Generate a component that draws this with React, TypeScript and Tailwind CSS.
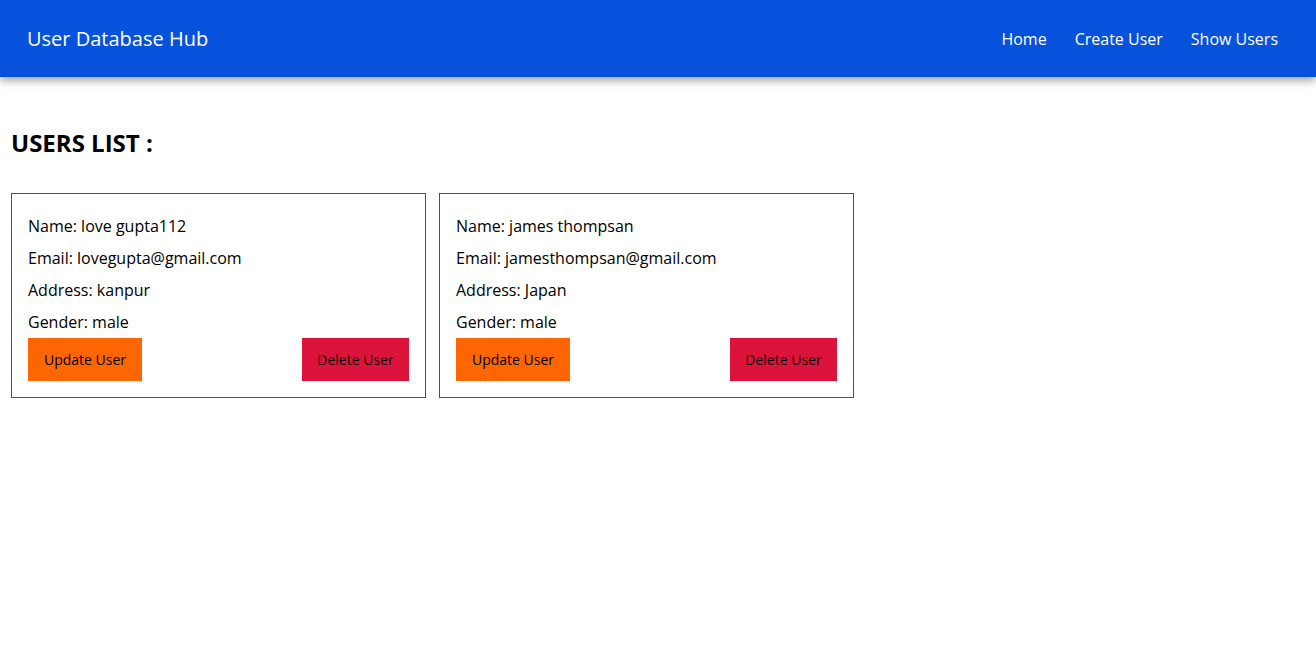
const users = [
  { name: 'love gupta112', email: 'lovegupta@gmail.com', address: 'kanpur', gender: 'male' },
  { name: 'james thompsan', email: 'jamesthompsan@gmail.com', address: 'Japan', gender: 'male' },
];

function UserCard({ user }: { user: (typeof users)[number] }) {
  return (
    <div className="w-[415px] border border-[#2552c4] px-4 pt-4 pb-4">
      <p className="leading-8">Name: {user.name}</p>
      <p className="leading-8">Email: {user.email}</p>
      <p className="leading-8">Address: {user.address}</p>
      <p className="leading-8">Gender: {user.gender}</p>
      <div className="flex justify-between">
        <button className="h-[43px] w-[114px] bg-[#ff6600] text-sm text-black">Update User</button>
        <button className="h-[43px] w-[107px] bg-[#dc143c] text-sm text-black">Delete User</button>
      </div>
    </div>
  );
}

export default function App() {
  return (
    <div className="min-h-screen bg-white text-black font-['Open_Sans',sans-serif]">
      {/* Navbar */}
      <nav className="flex h-[77px] items-center justify-between bg-[#0652dd] pl-[27px] pr-[38px] shadow-[0_4px_8px_rgba(0,0,0,0.35)]">
        <h1 className="text-xl text-white">User Database Hub</h1>
        <ul className="flex gap-7 text-base text-white">
          <li>Home</li>
          <li>Create User</li>
          <li>Show Users</li>
        </ul>
      </nav>

      <main className="px-[11px]">
        <h2 className="mt-[50px] text-2xl font-bold leading-8">USERS LIST :</h2>
        <div className="mt-[34px] flex gap-[13px]">
          {users.map((u) => (
            <UserCard key={u.email} user={u} />
          ))}
        </div>
      </main>
    </div>
  );
}
